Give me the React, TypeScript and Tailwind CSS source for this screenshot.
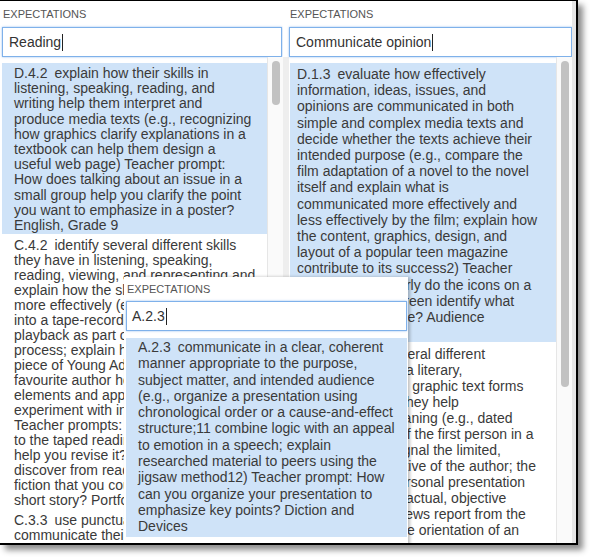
import React from "react";

type ItemProps = {
  code: string;
  lines: string[];
  selected?: boolean;
  cls: string;
};

function Item({ code, lines, selected, cls }: ItemProps) {
  return (
    <div className={(selected ? "bg-[#cfe3f8] " : "bg-white ") + cls}>
      {lines.map((l, i) => (
        <div key={i} className="whitespace-nowrap">
          {i === 0 ? (
            <>
              <span className="mr-[7px]">{code}</span>
              {l}
            </>
          ) : l === "" ? (
            "\u00a0"
          ) : (
            l
          )}
        </div>
      ))}
    </div>
  );
}

function Caret() {
  return <span className="inline-block w-px h-[17px] bg-[#222] ml-[1px]" />;
}

const leftItems = {
  a: [
    "explain how their skills in",
    "listening, speaking, reading, and",
    "writing help them interpret and",
    "produce media texts (e.g., recognizing",
    "how graphics clarify explanations in a",
    "textbook can help them design a",
    "useful web page) Teacher prompt:",
    "How does talking about an issue in a",
    "small group help you clarify the point",
    "you want to emphasize in a poster?",
    "English, Grade 9",
  ],
  b: [
    "identify several different skills",
    "they have in listening, speaking,",
    "reading, viewing, and representing and",
    "explain how the skills help them read and",
    "more effectively (e.g., recording a",
    "into a tape-recorder and analysing the",
    "playback as part of the revision",
    "process; explain how reading a",
    "piece of Young Adult fiction by a",
    "favourite author helped them identify",
    "elements and approaches they could",
    "experiment with in their own writing)",
    "Teacher prompts: How did listening",
    "to the taped reading of your story",
    "help you revise it? What did you",
    "discover from reading Young Adult",
    "fiction that you could use in your own",
    "short story? Portfolio",
  ],
  c: [
    "use punctuation correctly and",
    "communicate their intended meaning",
    "clearly and effectively in their",
    "written work",
  ],
};

const rightItems = {
  a: [
    "evaluate how effectively",
    "information, ideas, issues, and",
    "opinions are communicated in both",
    "simple and complex media texts and",
    "decide whether the texts achieve their",
    "intended purpose (e.g., compare the",
    "film adaptation of a novel to the novel",
    "itself and explain what is",
    "communicated more effectively and",
    "less effectively by the film; explain how",
    "the content, graphics, design, and",
    "layout of a popular teen magazine",
    "contribute to its success2) Teacher",
    "prompt: How clearly do the icons on a",
    "your computer screen identify what",
    "each tool will serve? Audience",
    "",
  ],
  b: [
    "identify several different",
    "characteristics of a literary,",
    "informational, and graphic text forms",
    "and explain how they help",
    "communicate meaning (e.g., dated",
    "vocabulary; use of the first person in a",
    "diary entries to signal the limited,",
    "personal perspective of the author; the",
    "subjective and personal presentation",
    "compared to the factual, objective",
    "language of the news report from the",
    "reporter's objective orientation of an",
  ],
};

const overlayLines = [
  "communicate in a clear, coherent",
  "manner appropriate to the purpose,",
  "subject matter, and intended audience",
  "(e.g., organize a presentation using",
  "chronological order or a cause-and-effect",
  "structure;11 combine logic with an appeal",
  "to emotion in a speech; explain",
  "researched material to peers using the",
  "jigsaw method12) Teacher prompt: How",
  "can you organize your presentation to",
  "emphasize key points? Diction and",
  "Devices",
];

export default function App() {
  return (
    <div className="w-[593px] h-[560px] bg-white font-['Liberation_Sans',Arial,Helvetica,sans-serif] text-[#3a3a3a]">
      <div className="relative w-[578px] h-[545px] border-t border-r-2 border-b-2 border-black bg-white shadow-[5px_5px_6px_rgba(0,0,0,0.45)] overflow-hidden flex">
        {/* Left panel */}
        <div className="w-[283px] flex flex-col pl-[2px]">
          <div className="h-[26px] pt-[7px] pl-[1px] text-[11px] leading-[13px] text-[#555]">
            EXPECTATIONS
          </div>
          <div className="h-[30px] w-[280px] border border-[#7fb1ea] shadow-[0_0_2px_rgba(110,165,235,0.7)] flex items-center pl-[6px] text-[14px] text-[#333] bg-white">
            Reading
            <Caret />
          </div>
          <div className="flex-1 flex min-h-0">
            <div className="w-[265px] pt-[6px] flex flex-col gap-[1px] text-[14px] overflow-hidden">
              <Item
                code="D.4.2"
                lines={leftItems.a}
                selected
                cls="pl-[12px] pt-[3px] pb-[1px] leading-[15.2px]"
              />
              <Item
                code="C.4.2"
                lines={leftItems.b}
                cls="pl-[12px] pt-[3px] pb-[1px] leading-[15px]"
              />
              <Item
                code="C.3.3"
                lines={leftItems.c}
                cls="pl-[12px] pt-[3px] pb-[1px] leading-[15px]"
              />
            </div>
            <div className="w-[16px] border-l border-[#e6e6e6] bg-[#fafafa] pt-[4px] flex justify-center">
              <div className="w-[8px] h-[44px] rounded-full bg-[#c2c2c2]" />
            </div>
          </div>
        </div>

        {/* Gap column */}
        <div className="w-[6px] flex flex-col">
          <div className="h-[56px] bg-white" />
          <div className="flex-1 bg-[#eeeeee]" />
        </div>

        {/* Right panel */}
        <div className="w-[283px] flex flex-col">
          <div className="h-[26px] pt-[7px] pl-[1px] text-[11px] leading-[13px] text-[#555]">
            EXPECTATIONS
          </div>
          <div className="h-[30px] w-[283px] border border-[#7fb1ea] shadow-[0_0_2px_rgba(110,165,235,0.7)] flex items-center pl-[6px] text-[14px] text-[#333] bg-white">
            Communicate opinion
            <Caret />
          </div>
          <div className="flex-1 flex min-h-0">
            <div className="w-[267px] pl-[1px] pt-[6px] flex flex-col gap-[1px] text-[14px] overflow-hidden">
              <Item
                code="D.1.3"
                lines={rightItems.a}
                selected
                cls="pl-[7px] pt-[3px] pb-[1px] leading-[16.2px]"
              />
              <Item
                code="C.1.2"
                lines={rightItems.b}
                cls="pl-[7px] pt-[3px] pb-[1px] leading-[16px]"
              />
            </div>
            <div className="w-[16px] border-l border-[#e6e6e6] bg-[#fafafa] pt-[4px] flex justify-center">
              <div className="w-[8px] h-[326px] rounded-full bg-[#c2c2c2]" />
            </div>
          </div>
        </div>

        {/* Right strip */}
        <div className="w-[4px] bg-[#e6e6e6]" />

        {/* Overlay panel */}
        <div className="absolute left-[124px] top-[276px] w-[284px] h-[270px] bg-white shadow-[2px_0_3px_rgba(0,0,0,0.25)] flex flex-col pl-[2px] pr-[1px]">
          <div className="pt-[6px] pl-[1px] text-[11px] leading-[13px] text-[#555]">
            EXPECTATIONS
          </div>
          <div className="mt-[5px] h-[30px] w-[281px] border border-[#7fb1ea] shadow-[0_0_2px_rgba(110,165,235,0.7)] flex items-center pl-[5px] text-[14px] text-[#333] bg-white">
            A.2.3
            <Caret />
          </div>
          <div className="mt-[7px] text-[14px]">
            <Item
              code="A.2.3"
              lines={overlayLines}
              selected
              cls="pl-[12px] pt-[1px] pb-[2px] leading-[16.3px]"
            />
          </div>
        </div>
      </div>
    </div>
  );
}
